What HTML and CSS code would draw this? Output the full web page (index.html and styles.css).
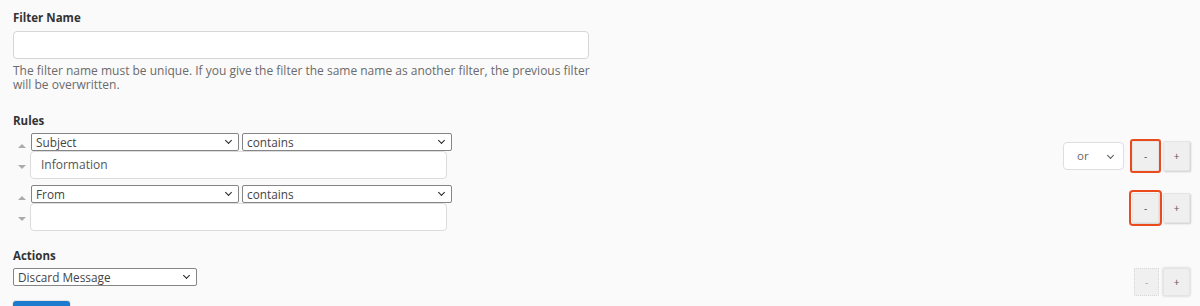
FILE: index.html
```html
<!DOCTYPE html>
<html>
<head>
<meta charset="utf-8">
<link rel="stylesheet" href="styles.css">
</head>
<body>
<div class="page">
  <div class="field">
    <label class="label">Filter Name</label>
    <input class="text-input" type="text">
    <p class="help">The filter name must be unique. If you give the filter the same name as another filter, the previous filter will be overwritten.</p>
  </div>

  <div class="section rules">
    <div class="label">Rules</div>
    <div class="rule-row">
      <div class="rule-left">
        <div class="arrows">
          <span class="arrow up"></span>
          <span class="arrow down"></span>
        </div>
        <div class="rule-fields">
          <div class="selects">
            <div class="sel sel-part">Subject<span class="chev"></span></div>
            <div class="sel sel-match">contains<span class="chev"></span></div>
          </div>
          <div class="rule-input">Information</div>
        </div>
      </div>
      <div class="rule-right">
        <div class="or-select">or<span class="chev light"></span></div>
        <button class="btn minus hl">-</button>
        <button class="btn plus">+</button>
      </div>
    </div>
    <div class="rule-row">
      <div class="rule-left">
        <div class="arrows">
          <span class="arrow up"></span>
          <span class="arrow down"></span>
        </div>
        <div class="rule-fields">
          <div class="selects">
            <div class="sel sel-part">From<span class="chev"></span></div>
            <div class="sel sel-match">contains<span class="chev"></span></div>
          </div>
          <div class="rule-input"></div>
        </div>
      </div>
      <div class="rule-right">
        <button class="btn minus hl hl2">-</button>
        <button class="btn plus">+</button>
      </div>
    </div>
  </div>

  <div class="section actions">
    <div class="label">Actions</div>
    <div class="action-row">
      <div class="sel sel-action">Discard Message<span class="chev"></span></div>
      <div class="rule-right">
        <button class="btn minus disabled">-</button>
        <button class="btn plus glow">+</button>
      </div>
    </div>
  </div>

  <button class="submit" aria-label="Create"></button>
</div>
</body>
</html>
```

FILE: styles.css
```css
* { box-sizing: border-box; }
html, body { margin: 0; padding: 0; }
body {
  background: #fafafa;
  font-family: "Open Sans", "Liberation Sans", sans-serif;
  color: #333;
  width: 1200px;
  height: 306px;
  overflow: hidden;
}
.page {
  padding: 9px 10px 0 13px;
}
.label {
  display: block;
  font-size: 11.5px;
  font-weight: 700;
  line-height: 18px;
  color: #333;
  margin-bottom: 4px;
}
.text-input {
  display: block;
  width: 576px;
  height: 28px;
  border: 1px solid #d6d6d6;
  border-radius: 4px;
  background: #fff;
  font: inherit;
}
.help {
  margin: 5px 0 0;
  width: 580px;
  font-size: 12px;
  line-height: 14px;
  color: #6b6b6b;
}
.rules { margin-top: 20px; }
.rules .label { margin-bottom: 3px; }
.rule-row {
  display: flex;
  justify-content: space-between;
  align-items: center;
  height: 46px;
  margin-bottom: 6px;
}
.rule-left { display: flex; align-items: center; height: 46px; }
.arrows {
  width: 17px;
  display: flex;
  flex-direction: column;
  align-items: center;
  gap: 17px;
  padding-left: 1px;
  padding-top: 1px;
}
.arrow {
  width: 0; height: 0;
  border-left: 4px solid transparent;
  border-right: 4px solid transparent;
}
.arrow.up { border-bottom: 4px solid #ababab; }
.arrow.down { border-top: 4px solid #ababab; }
.rule-fields { display: flex; flex-direction: column; }
.selects { display: flex; gap: 3px; margin-left: 1px; }
.sel {
  position: relative;
  height: 18px;
  background: #fff;
  border: 1px solid #858585;
  border-radius: 2px;
  font-size: 11.8px;
  line-height: 16px;
  color: #444;
  padding-left: 4px;
}
.sel-part { width: 208px; }
.sel-match { width: 210px; }
.sel-action { width: 184px; }
.chev {
  position: absolute;
  right: 7px;
  top: 4px;
  width: 5px; height: 5px;
  border-right: 1.5px solid #222;
  border-bottom: 1.5px solid #222;
  transform: rotate(45deg);
}
.chev.light { border-color: #555; right: 10px; top: 10px; }
.rule-input {
  width: 417px;
  height: 28px;
  background: #fff;
  border: 1px solid #dcdcdc;
  border-radius: 4px;
  font-size: 12px;
  line-height: 26px;
  padding-left: 10px;
  color: #555;
}
.rule-right {
  display: flex;
  align-items: center;
  gap: 4px;
}
.or-select {
  position: relative;
  width: 61px;
  height: 28px;
  margin-right: 4px;
  background: #fff;
  border: 1px solid #dedede;
  border-radius: 4px;
  font-size: 11.5px;
  line-height: 26px;
  color: #666;
  padding-left: 13px;
}
.btn {
  width: 27px;
  height: 30px;
  border: 1px solid #e4e4e4;
  border-radius: 1px;
  background: #efefef;
  box-shadow: 1px 1px 2px rgba(0,0,0,0.18);
  font-family: "Open Sans", sans-serif;
  font-size: 10px;
  color: #555;
  padding: 0;
}
.btn.hl { outline: 2px solid #ea4a1c; outline-offset: 0; }
.btn.hl2 { outline-offset: 1.5px; }
.btn.disabled {
  width: 25px;
  height: 28px;
  box-shadow: none;
  border: 1px dotted #d8d8d8;
  color: #aaa;
  background: #f0f0f0;
}
.btn.glow {
  height: 28px;
  box-shadow: 0 0 3px rgba(0,0,0,0.2);
}
.actions { margin-top: 16px; }
.actions .label { margin-bottom: 3px; }
.action-row {
  display: flex;
  justify-content: space-between;
  align-items: flex-start;
}
.submit {
  display: block;
  margin-top: 5px;
  width: 57px;
  height: 30px;
  border: none;
  border-radius: 3px;
  background: #1d7bcf;
  box-shadow: 0 0 0 1px #e4e4e4;
  padding: 0;
}
```
